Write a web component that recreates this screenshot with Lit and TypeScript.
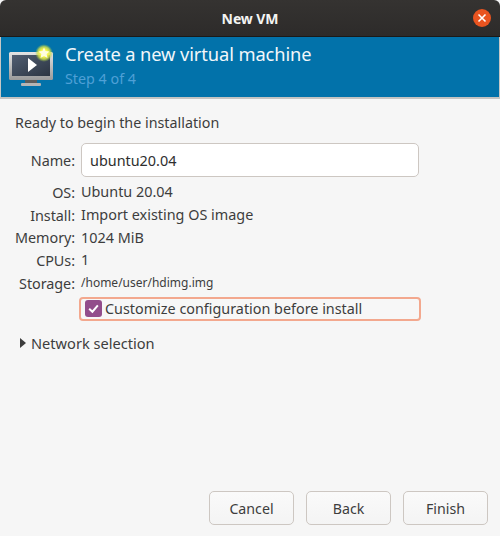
import { LitElement, html, css } from "lit";
import { customElement } from "lit/decorators.js";

@customElement("app-root")
export class AppRoot extends LitElement {
  static styles = css`
    :host { display: block; width: 500px; height: 536px; font-family: "Noto Sans", sans-serif; font-size: 14px; color: #3d3d3d; background: #f6f6f6; overflow: hidden; }
    .win { width: 500px; height: 536px; display: flex; flex-direction: column; }
    .titlebar { height: 36px; flex: none; background: linear-gradient(#353331, #2d2b2a); border-bottom: 1px solid #1b1a19; display: grid; grid-template-columns: 1fr auto 1fr; align-items: center; border-radius: 6px 6px 0 0; }
    .title { color: #f4f4f3; font-weight: 700; font-size: 14px; letter-spacing: -0.1px; }
    .close { justify-self: end; margin-right: 9px; width: 18px; height: 18px; border-radius: 50%; background: #e95420; display: flex; align-items: center; justify-content: center; }
    .banner { height: 62px; flex: none; background: #0272aa; border: 1px solid #c7c7c5; border-top: none; border-bottom: 2px solid #c4c4c2; display: flex; align-items: flex-start; box-sizing: border-box; }
    .banner svg { flex: none; margin: 4px 0 0 6px; }
    .btext { margin-left: 10px; display: flex; flex-direction: column; }
    .h1 { color: #f2f7fa; font-size: 18.3px; line-height: 24px; margin-top: 5px; letter-spacing: -0.1px; white-space: nowrap; }
    .step { color: #4fa0d6; font-size: 14.3px; line-height: 20px; margin-top: 3px; }
    .body { flex: 1; display: flex; flex-direction: column; padding: 14px 12px 11px 15px; min-height: 0; }
    .ready { line-height: 20px; font-size: 14.3px; }
    .form { display: grid; grid-template-columns: 60px auto; column-gap: 6px; justify-content: start; margin-top: 10px; font-size: 14.4px; }
    .form .l { text-align: right; align-self: center; white-space: nowrap; letter-spacing: -0.05px; }
    .form .v { height: 22.75px; line-height: 22.75px; white-space: nowrap; }
    .form .row-name { height: 34px; }
    .form .spacer { height: 4px; grid-column: 1 / 3; }
    .input { height: 32px; background: #fff; border: 1px solid #cdc7c2; border-radius: 5px; padding: 0 8px; display: flex; align-items: center; color: #2e2e2e; font-size: 14.4px; box-sizing: content-box; width: 320px; }
    .form .storage { font-size: 12px; }
    .check { grid-column: 2; margin-left: -2px; height: 20px; box-sizing: content-box; border: 2px solid #f3a88e; border-radius: 4px; background: #f7f7f7; display: flex; align-items: center; padding-left: 4px; gap: 3px; white-space: nowrap; font-size: 14.36px; margin-top: 2px; width: 334px; }
    .box { width: 17px; height: 17px; border-radius: 3px; background: #924d8b; display: flex; align-items: center; justify-content: center; flex: none; }
    .expander { display: flex; align-items: center; margin-top: 11px; padding-left: 5px; gap: 5px; line-height: 22px; font-size: 14.6px; }
    .arrow { width: 0; height: 0; border-left: 6px solid #3d3d3d; border-top: 5px solid transparent; border-bottom: 5px solid transparent; }
    .footer { margin-top: auto; display: flex; justify-content: flex-end; gap: 12px; }
    .btn { width: 85px; height: 34px; box-sizing: border-box; border: 1px solid #cdc7c2; border-radius: 5px; background: linear-gradient(#fafafa, #f4f4f4); display: flex; align-items: center; justify-content: center; font-size: 14.2px; color: #3d3d3d; }
  `;

  render() {
    return html`<div class="win">
      <div class="titlebar">
        <span></span>
        <span class="title">New VM</span>
        <span class="close"><svg width="10" height="10" viewBox="0 0 10 10"><path d="M1.5 1.5L8.5 8.5M8.5 1.5L1.5 8.5" stroke="#fff" stroke-width="1.6" fill="none"/></svg></span>
      </div>
      <div class="banner">
        <svg width="48" height="48" viewBox="0 0 48 48">
          <defs>
            <linearGradient id="fr" x1="0" y1="0" x2="0" y2="1"><stop offset="0" stop-color="#e4e4e4"/><stop offset="1" stop-color="#9a9a9a"/></linearGradient>
            <linearGradient id="sc" x1="0" y1="0" x2="1" y2="1"><stop offset="0" stop-color="#515e72"/><stop offset="1" stop-color="#2c3542"/></linearGradient>
            <radialGradient id="gl"><stop offset="0.4" stop-color="#fbfb4a"/><stop offset="0.7" stop-color="#d8e34a" stop-opacity=".8"/><stop offset="1" stop-color="#8dc04a" stop-opacity="0"/></radialGradient>
          </defs>
          <rect x="2" y="11" width="44" height="28" rx="1.5" fill="url(#fr)"/>
          <rect x="5" y="14" width="38" height="21" fill="url(#sc)"/>
          <rect x="18" y="39" width="12" height="3" fill="#5c5c5c"/>
          <rect x="14" y="42" width="20" height="3" rx="1" fill="#b5b5b5"/>
          <path d="M21 17L30 24L21 31Z" fill="#fff"/>
          <circle cx="37" cy="12" r="9" fill="url(#gl)"/>
          <path d="M37 6.5l1.6 3.6 4 .4-3 2.6.9 3.9-3.5-2-3.5 2 .9-3.9-3-2.6 4-.4z" fill="#fffde0"/>
        </svg>
        <div class="btext">
          <span class="h1">Create a new virtual machine</span>
          <span class="step">Step 4 of 4</span>
        </div>
      </div>
      <div class="body">
        <div class="ready">Ready to begin the installation</div>
        <div class="form">
          <span class="l">Name:</span>
          <div class="row-name"><div class="input">ubuntu20.04</div></div>
          <div class="spacer"></div>
          <span class="l">OS:</span><span class="v">Ubuntu 20.04</span>
          <span class="l">Install:</span><span class="v">Import existing OS image</span>
          <span class="l">Memory:</span><span class="v">1024 MiB</span>
          <span class="l">CPUs:</span><span class="v">1</span>
          <span class="l">Storage:</span><span class="v storage">/home/user/hdimg.img</span>
          <div class="check">
            <span class="box"><svg width="13" height="13" viewBox="0 0 12 12"><path d="M2 6.2L5 9L10 3.2" stroke="#fff" stroke-width="1.8" fill="none"/></svg></span>
            Customize configuration before install
          </div>
        </div>
        <div class="expander"><span class="arrow"></span>Network selection</div>
        <div class="footer">
          <div class="btn">Cancel</div>
          <div class="btn">Back</div>
          <div class="btn">Finish</div>
        </div>
      </div>
    </div>`;
  }
}
